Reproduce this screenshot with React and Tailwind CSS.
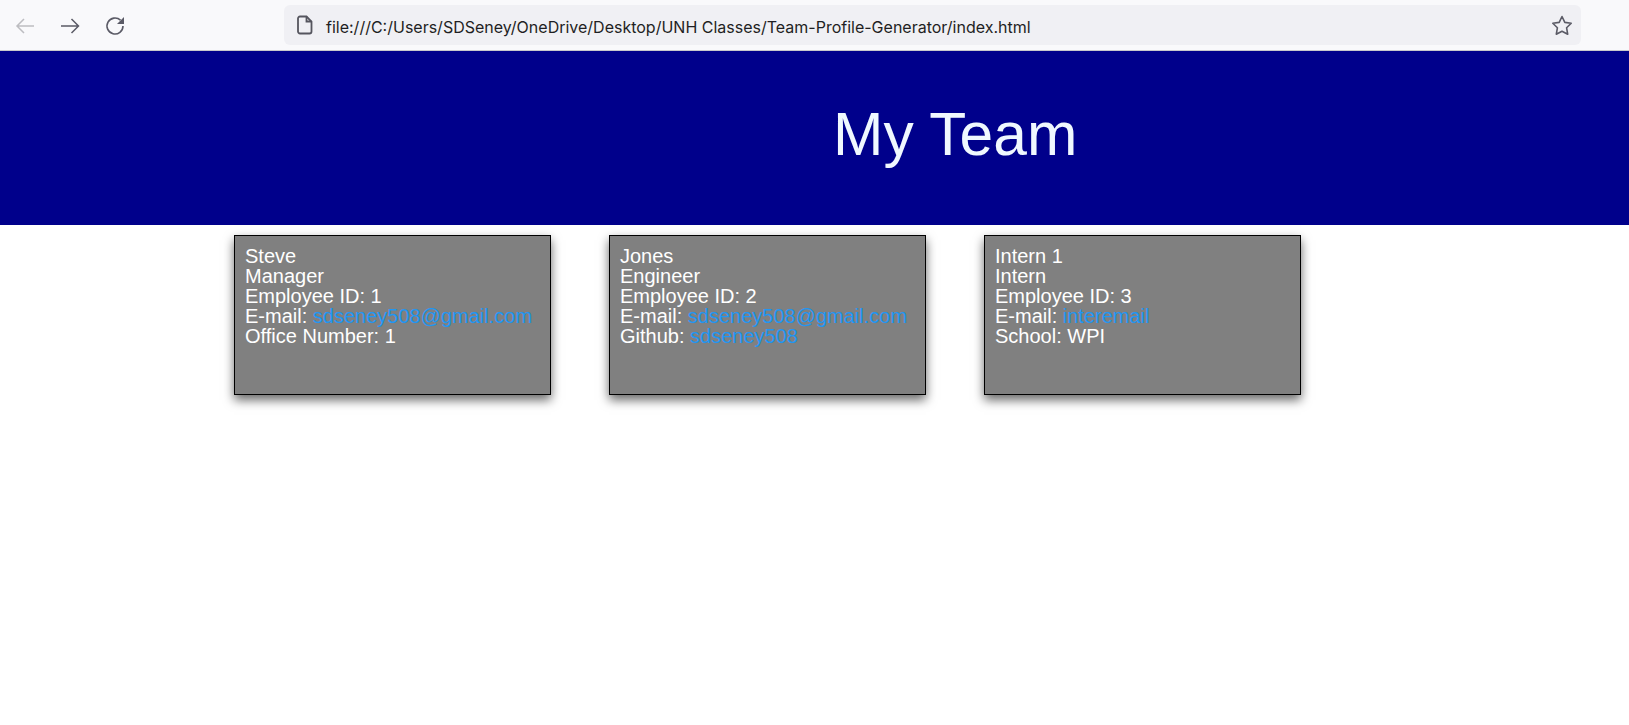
// Team profile page inside a browser window
import React from 'react'

const team = [
    { name: "Steve", role: "Manager", id: 1, email: "sdseney508@gmail.com", extraLabel: "Office Number: ", extra: "1" },
    { name: "Jones", role: "Engineer", id: 2, email: "sdseney508@gmail.com", extraLabel: "Github: ", extraLink: "sdseney508" },
    { name: "Intern 1", role: "Intern", id: 3, email: "interemail", extraLabel: "School: ", extra: "WPI" },
]

function BrowserBar() {
    return (
        <div className="flex h-[51px] items-center border-b border-[#c8c8cc] bg-[#f9f9fb]">
            <div className="flex w-[284px] items-center gap-[23px] pl-[14px]">
                <svg width="22" height="22" viewBox="0 0 22 22" fill="none" stroke="#bdbdc1" strokeWidth="1.5">
                    <path d="M20 12H3M10 5l-7 7 7 7" />
                </svg>
                <svg width="22" height="22" viewBox="0 0 22 22" fill="none" stroke="#5b5b66" strokeWidth="1.5">
                    <path d="M2 12h17.500M12.500 5l7 7-7 7" />
                </svg>
                <svg width="22" height="22" viewBox="0 0 22 22" fill="none" stroke="#5b5b66" strokeWidth="1.6">
                    <path d="M19 12a8 8 0 1 1-2.500-5.800" />
                    <path d="M20 3v7h-7z" fill="#5b5b66" stroke="none" />
                </svg>
            </div>
            <div className="flex h-[40px] w-[1297px] items-center rounded-md bg-[#f0f0f4] pl-[12px] pr-[8px]">
                <svg width="18" height="20" viewBox="0 0 18 20" fill="none" stroke="#55555e" strokeWidth="1.8">
                    <path d="M2 3.500a2 2 0 0 1 2-2h6.500l5 5v10a2 2 0 0 1-2 2h-9.500a2 2 0 0 1-2-2z" />
                    <path d="M10.500 1.500v5h5" />
                </svg>
                <span className="ml-[12px] flex-1 pt-[3px] font-['Inter','Noto_Sans',sans-serif] text-[16px] text-[#1f1f23]">
                    file:///C:/Users/SDSeney/OneDrive/Desktop/UNH Classes/Team-Profile-Generator/index.html
                </span>
                <svg width="22" height="22" viewBox="0 0 22 22" fill="none" stroke="#5b5b66" strokeWidth="1.6" strokeLinejoin="round">
                    <path d="M11 2.500l2.800 5.900 6.400.9-4.600 4.500 1.100 6.400-5.700-3-5.700 3 1.100-6.400-4.600-4.500 6.400-.9z" />
                </svg>
            </div>
        </div>
    )
}

function Card({ person }) {
    return (
        <div className="h-[160px] w-[317px] border border-black bg-[#808080] p-[10px] text-[20px] leading-[20px] text-white shadow-[0_5px_10px_rgba(0,0,0,0.6)]">
            <div>{person.name}</div>
            <div>{person.role}</div>
            <div>Employee ID: {person.id}</div>
            <div>E-mail: <a className="text-[#2196f3]">{person.email}</a></div>
            <div>
                {person.extraLabel}
                {person.extraLink ? <a className="text-[#2196f3]">{person.extraLink}</a> : person.extra}
            </div>
        </div>
    )
}

export default function App() {
    return (
        <div className="min-h-[725px] bg-white font-['Liberation_Sans',Arial,sans-serif]">
            <BrowserBar />
            <header className="h-[174px] bg-[#00008b] pl-[833px] pt-[47px]">
                <h1 className="text-[60.500px] leading-[72px] text-[#f0f8ff]">My Team</h1>
            </header>
            <main className="flex gap-[58px] pl-[234px] pt-[10px]">
                {team.map((person) => (
                    <Card key={person.id} person={person} />
                ))}
            </main>
        </div>
    )
}
